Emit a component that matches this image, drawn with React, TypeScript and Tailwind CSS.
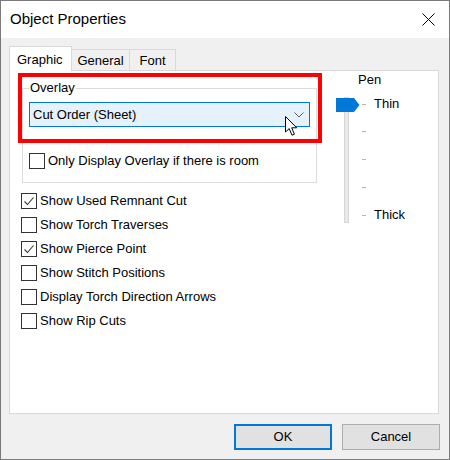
import React from "react";

interface CheckItem {
  label: string;
  checked: boolean;
}

const options: CheckItem[] = [
  { label: "Show Used Remnant Cut", checked: true },
  { label: "Show Torch Traverses", checked: false },
  { label: "Show Pierce Point", checked: true },
  { label: "Show Stitch Positions", checked: false },
  { label: "Display Torch Direction Arrows", checked: false },
  { label: "Show Rip Cuts", checked: false },
];

function CheckBox({ checked }: { checked: boolean }) {
  return (
    <div className="w-[16px] h-[16px] shrink-0 border border-[#333333] bg-white flex items-center justify-center">
      {checked && (
        <svg width="14" height="14" viewBox="0 0 14 14">
          <polyline points="2.5,7.5 5.5,10.5 11.5,3.5" fill="none" stroke="#3c3c3c" strokeWidth="1.1" />
        </svg>
      )}
    </div>
  );
}

function CheckRow({ label, checked }: CheckItem) {
  return (
    <div className="flex items-center h-[16px]">
      <CheckBox checked={checked} />
      <span className="ml-[3px] leading-[16px] whitespace-nowrap">{label}</span>
    </div>
  );
}

export default function App() {
  return (
    <div className="w-[450px] h-[460px] border border-[#7a7a7a] bg-[#f0f0f0] flex flex-col font-['Liberation_Sans',Arial,sans-serif] text-[13px] text-black">
      {/* title bar */}
      <div className="h-[37px] bg-white flex items-center pl-[9px] pr-[14px] shrink-0">
        <span className="text-[15px] flex-1">Object Properties</span>
        <svg width="13" height="13" viewBox="0 0 13 13">
          <path d="M0.5 0.5 L12.5 12.5 M12.5 0.5 L0.5 12.5" stroke="#000" strokeWidth="1" />
        </svg>
      </div>

      <div className="flex-1 flex flex-col pt-[8px] pl-[8px] pr-[9px]">
        {/* tabs */}
        <div className="flex items-end h-[24px]">
          <div className="relative z-10 w-[63px] h-[25px] -mb-[1px] bg-white border border-b-0 border-[#d9d9d9] flex items-start pt-[3px] pl-[7px]">
            Graphic
          </div>
          <div className="-ml-[1px] w-[59px] h-[21px] border border-b-0 border-[#d9d9d9] flex items-center justify-center pt-[1px]">
            General
          </div>
          <div className="-ml-[1px] w-[47px] h-[21px] border border-b-0 border-[#d9d9d9] flex items-center justify-center pt-[1px]">
            Font
          </div>
        </div>

        {/* tab panel */}
        <div className="relative w-[430px] h-[344px] bg-white border border-[#d9d9d9] flex">
          <div className="w-[320px] flex flex-col">
            <div className="relative ml-[12px] mt-[17px] w-[295px] border border-[#dcdcdc] pt-[13px] px-[6px] pb-[13px]">
              <span className="absolute -top-[8px] left-[6px] bg-white px-[1px] leading-[14px]">Overlay</span>
              <div className="h-[25px] border border-[#0078d7] bg-[#e5f1fb] flex items-center pl-[3px] pr-[5px]">
                <span className="flex-1">Cut Order (Sheet)</span>
                <svg width="10" height="6" viewBox="0 0 10 6">
                  <polyline points="0.5,0.5 5,5 9.5,0.5" fill="none" stroke="#606060" strokeWidth="1" />
                </svg>
              </div>
              <div className="mt-[26px]">
                <CheckRow label="Only Display Overlay if there is room" checked={false} />
              </div>
            </div>

            <div className="ml-[11px] mt-[10px] flex flex-col gap-[8px]">
              {options.map((o) => (
                <CheckRow key={o.label} label={o.label} checked={o.checked} />
              ))}
            </div>
          </div>

          {/* pen slider */}
          <div className="ml-[6px] flex flex-col">
            <div className="pl-[22px] mt-[1px] leading-[16px]">Pen</div>
            <div className="mt-[9px] h-[126px] flex">
              <div className="relative w-[26px] h-full">
                <div className="ml-[8px] w-[5px] h-full bg-[#e7eaea] border border-[#d6d6d6]" />
                <svg className="absolute top-[1px] left-0" width="24" height="14" viewBox="0 0 24 14">
                  <polygon points="0,0 18,0 23.5,7 18,14 0,14" fill="#0078d7" />
                </svg>
              </div>
              <div className="-mt-[1px] flex flex-col gap-[12px]">
                {["Thin", "", "", "", "Thick"].map((t, i) => (
                  <div key={i} className="h-[16px] flex items-center">
                    <div className="w-[4px] h-[1px] bg-[#b4b4b4]" />
                    {t && <span className="ml-[8px] leading-[16px]">{t}</span>}
                  </div>
                ))}
              </div>
            </div>
          </div>

          {/* annotation rectangle */}
          <div className="absolute left-[8px] top-[2px] w-[304px] h-[70px] border-[4px] border-[#ff0000] pointer-events-none" />

          {/* mouse cursor */}
          <svg className="absolute left-[275px] top-[45px]" width="14" height="21" viewBox="0 0 14 21">
            <path
              d="M0.5 0.5 L0.5 16 L4.2 12.6 L7 19.2 L9.4 18.2 L6.7 11.8 L11.7 11.8 Z"
              fill="#ffffff"
              stroke="#000000"
              strokeWidth="1"
              strokeLinejoin="miter"
            />
          </svg>
        </div>

        {/* buttons */}
        <div className="mt-[10px] flex justify-end gap-[10px]">
          <button className="w-[98px] h-[26px] bg-[#e1e1e1] border-2 border-[#0078d7]">OK</button>
          <button className="w-[98px] h-[26px] bg-[#e1e1e1] border border-[#adadad]">Cancel</button>
        </div>
      </div>
    </div>
  );
}
